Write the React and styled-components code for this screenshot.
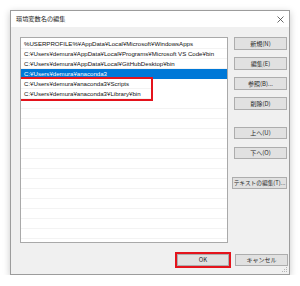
import React from "react";
import styled, { createGlobalStyle } from "styled-components";

const GlobalStyle = createGlobalStyle`
  html, body { margin: 0; padding: 0; background: #ffffff; }
  body { font-family: "Liberation Sans", "Noto Sans CJK JP", sans-serif; }
`;

const Page = styled.div`
  padding: 10px 0 0 10px;
`;

const Window = styled.div`
  position: relative;
  box-sizing: border-box;
  width: 280px;
  height: 265px;
  border: 1px solid #9c9c9c;
  background: #f0f0f0;
  display: flex;
  flex-direction: column;
  box-shadow: 0 2px 7px rgba(0, 0, 0, 0.22);
`;

const TitleBar = styled.div`
  height: 16px;
  flex: none;
  background: #ffffff;
  display: flex;
  align-items: center;
  justify-content: space-between;
  padding: 0 5px 0 5px;
`;

const Title = styled.span`
  font-family: "Noto Sans CJK JP", sans-serif;
  font-size: 6.2px;
  color: #222;
  line-height: 1;
`;

const Body = styled.div`
  flex: 1;
  padding: 10px 1px 8px 9px;
  display: flex;
  flex-direction: column;
`;

const Main = styled.div`
  display: flex;
  gap: 6px;
`;

const List = styled.div`
  box-sizing: border-box;
  width: 208px;
  height: 206px;
  background: #fff;
  border: 1px solid #a9a9a9;
  padding-top: 1px;
  overflow: hidden;
`;

const Row = styled.div`
  height: 10px;
  box-sizing: border-box;
  line-height: 10px;
  padding-left: 3px;
  font-family: "Liberation Sans", sans-serif;
  font-size: 6.1px;
  white-space: nowrap;
  color: ${(p) => (p.$selected ? "#ffffff" : "#111111")};
  background: ${(p) => (p.$selected ? "#0078d7" : "transparent")};
  border-bottom: 1px solid ${(p) => (p.$selected ? "#0078d7" : "#f3f3f3")};
`;

const Highlight = styled.div`
  width: 130px;
  outline: 2.5px solid #e4131c;
  outline-offset: 0px;
`;

const ButtonCol = styled.div`
  width: 53px;
  display: flex;
  flex-direction: column;
  align-items: flex-end;
`;

const Button = styled.button`
  box-sizing: border-box;
  width: ${(p) => p.$w || 53}px;
  height: ${(p) => p.$h || 13}px;
  margin: ${(p) => p.$mt || 0}px 0 0 0;
  padding: 0;
  background: #e1e1e1;
  border: 1px solid #adadad;
  font-family: "Noto Sans CJK JP", "Liberation Sans", sans-serif;
  font-size: ${(p) => p.$fs || 6}px;
  color: #2a2a2a;
  line-height: 1;
  white-space: nowrap;
  display: flex;
  align-items: center;
  justify-content: center;
`;

const Footer = styled.div`
  margin-top: 11px;
  display: flex;
  justify-content: flex-end;
  gap: 6px;
`;

const OkFrame = styled.div`
  display: flex;
  outline: 2.5px solid #e4131c;
  outline-offset: 0px;
`;

const Grip = styled.svg`
  position: absolute;
  right: 1px;
  bottom: 1px;
`;

const rows = [
  "%USERPROFILE%¥AppData¥Local¥Microsoft¥WindowsApps",
  "C:¥Users¥demura¥AppData¥Local¥Programs¥Microsoft VS Code¥bin",
  "C:¥Users¥demura¥AppData¥Local¥GitHubDesktop¥bin",
];

export default function App() {
  const empties = Array.from({ length: 14 });
  return (
    <>
      <GlobalStyle />
      <Page>
        <Window>
          <TitleBar>
            <Title>環境変数名の編集</Title>
            <svg width="7" height="7" viewBox="0 0 7 7">
              <path d="M0.5 0.5 L6.5 6.5 M6.5 0.5 L0.5 6.5" stroke="#444" strokeWidth="0.8" />
            </svg>
          </TitleBar>
          <Body>
            <Main>
              <List>
                {rows.map((r) => (
                  <Row key={r}>{r}</Row>
                ))}
                <Row $selected>C:¥Users¥demura¥anaconda3</Row>
                <Highlight>
                  <Row>C:¥Users¥demura¥anaconda3¥Scripts</Row>
                  <Row>C:¥Users¥demura¥anaconda3¥Library¥bin</Row>
                </Highlight>
                {empties.map((_, i) => (
                  <Row key={i} />
                ))}
              </List>
              <ButtonCol>
                <Button>新規(N)</Button>
                <Button $mt={7}>編集(E)</Button>
                <Button $mt={7}>参照(B)...</Button>
                <Button $mt={7}>削除(D)</Button>
                <Button $mt={17} $h={12}>上へ(U)</Button>
                <Button $mt={8} $h={12}>下へ(O)</Button>
                <Button $mt={18} $h={12} $w={55} $fs={5.7}>テキストの編集(T)...</Button>
              </ButtonCol>
            </Main>
            <Footer>
              <OkFrame>
                <Button $w={52} $h={12}>OK</Button>
              </OkFrame>
              <Button $w={53} $h={12}>キャンセル</Button>
            </Footer>
          </Body>
          <Grip width="6" height="6" viewBox="0 0 6 6">
            <g fill="#b5b5b5">
              <rect x="4" y="0" width="1" height="1" />
              <rect x="2" y="2" width="1" height="1" />
              <rect x="4" y="2" width="1" height="1" />
              <rect x="0" y="4" width="1" height="1" />
              <rect x="2" y="4" width="1" height="1" />
              <rect x="4" y="4" width="1" height="1" />
            </g>
          </Grip>
        </Window>
      </Page>
    </>
  );
}
